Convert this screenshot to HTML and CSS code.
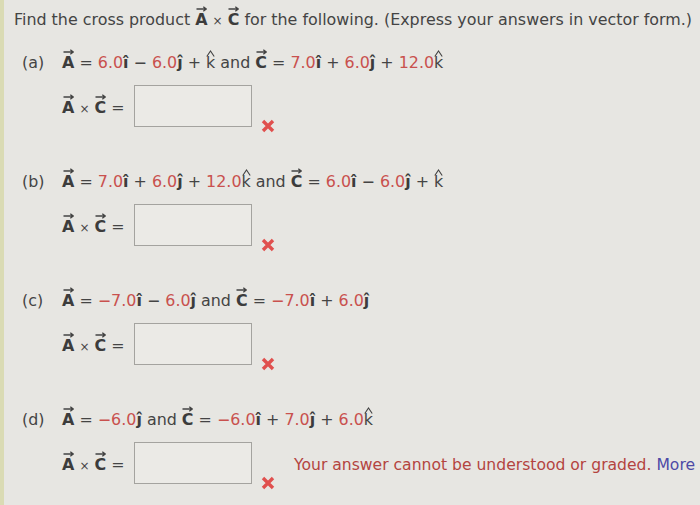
FILE: index.html
```html
<!DOCTYPE html>
<html>
<head>
<meta charset="utf-8">
<link rel="stylesheet" href="styles.css">
</head>
<body>
<div class="page">
  <p class="title">Find the cross product <span class="vec"><span class="arr"><svg width="11" height="6" viewBox="0 0 11 6"><path d="M0.5 3H10M7.3 0.7L10.2 3L7.3 5.3" fill="none" stroke="#444" stroke-width="1.3"/></svg></span><b>A</b></span> <span class="times">×</span> <span class="vec"><span class="arr"><svg width="11" height="6" viewBox="0 0 11 6"><path d="M0.5 3H10M7.3 0.7L10.2 3L7.3 5.3" fill="none" stroke="#444" stroke-width="1.3"/></svg></span><b>C</b></span> for the following. (Express your answers in vector form.)</p>

  <div class="part">
    <div class="formula">
      <span class="lbl">(a)</span>
      <span class="vec"><span class="arr"><svg width="11" height="6" viewBox="0 0 11 6"><path d="M0.5 3H10M7.3 0.7L10.2 3L7.3 5.3" fill="none" stroke="#444" stroke-width="1.3"/></svg></span><b>A</b></span> = <span class="num">6.0</span><b>î</b> − <span class="num">6.0</span><b>ĵ</b> + <span class="hat"><span class="cap"><svg width="9" height="7" viewBox="0 0 9 7"><path d="M0.8 6.5L4.5 1L8.2 6.5" fill="none" stroke="#444" stroke-width="1.1"/></svg></span>k</span> and <span class="vec"><span class="arr"><svg width="11" height="6" viewBox="0 0 11 6"><path d="M0.5 3H10M7.3 0.7L10.2 3L7.3 5.3" fill="none" stroke="#444" stroke-width="1.3"/></svg></span><b>C</b></span> = <span class="num">7.0</span><b>î</b> + <span class="num">6.0</span><b>ĵ</b> + <span class="num">12.0</span><span class="hat"><span class="cap"><svg width="9" height="7" viewBox="0 0 9 7"><path d="M0.8 6.5L4.5 1L8.2 6.5" fill="none" stroke="#444" stroke-width="1.1"/></svg></span>k</span>
    </div>
    <div class="answer">
      <span class="alabel"><span class="vec"><span class="arr"><svg width="11" height="6" viewBox="0 0 11 6"><path d="M0.5 3H10M7.3 0.7L10.2 3L7.3 5.3" fill="none" stroke="#444" stroke-width="1.3"/></svg></span><b>A</b></span> <span class="times">×</span> <span class="vec"><span class="arr"><svg width="11" height="6" viewBox="0 0 11 6"><path d="M0.5 3H10M7.3 0.7L10.2 3L7.3 5.3" fill="none" stroke="#444" stroke-width="1.3"/></svg></span><b>C</b></span> =</span>
      <span class="box"></span>
      <svg class="wrong" width="14" height="14" viewBox="0 0 14 14"><path d="M2 2L12 12M12 2L2 12" stroke="#e0504e" stroke-width="3.4"/></svg>
    </div>
  </div>

  <div class="part">
    <div class="formula">
      <span class="lbl">(b)</span>
      <span class="vec"><span class="arr"><svg width="11" height="6" viewBox="0 0 11 6"><path d="M0.5 3H10M7.3 0.7L10.2 3L7.3 5.3" fill="none" stroke="#444" stroke-width="1.3"/></svg></span><b>A</b></span> = <span class="num">7.0</span><b>î</b> + <span class="num">6.0</span><b>ĵ</b> + <span class="num">12.0</span><span class="hat"><span class="cap"><svg width="9" height="7" viewBox="0 0 9 7"><path d="M0.8 6.5L4.5 1L8.2 6.5" fill="none" stroke="#444" stroke-width="1.1"/></svg></span>k</span> and <span class="vec"><span class="arr"><svg width="11" height="6" viewBox="0 0 11 6"><path d="M0.5 3H10M7.3 0.7L10.2 3L7.3 5.3" fill="none" stroke="#444" stroke-width="1.3"/></svg></span><b>C</b></span> = <span class="num">6.0</span><b>î</b> − <span class="num">6.0</span><b>ĵ</b> + <span class="hat"><span class="cap"><svg width="9" height="7" viewBox="0 0 9 7"><path d="M0.8 6.5L4.5 1L8.2 6.5" fill="none" stroke="#444" stroke-width="1.1"/></svg></span>k</span>
    </div>
    <div class="answer">
      <span class="alabel"><span class="vec"><span class="arr"><svg width="11" height="6" viewBox="0 0 11 6"><path d="M0.5 3H10M7.3 0.7L10.2 3L7.3 5.3" fill="none" stroke="#444" stroke-width="1.3"/></svg></span><b>A</b></span> <span class="times">×</span> <span class="vec"><span class="arr"><svg width="11" height="6" viewBox="0 0 11 6"><path d="M0.5 3H10M7.3 0.7L10.2 3L7.3 5.3" fill="none" stroke="#444" stroke-width="1.3"/></svg></span><b>C</b></span> =</span>
      <span class="box"></span>
      <svg class="wrong" width="14" height="14" viewBox="0 0 14 14"><path d="M2 2L12 12M12 2L2 12" stroke="#e0504e" stroke-width="3.4"/></svg>
    </div>
  </div>

  <div class="part">
    <div class="formula">
      <span class="lbl">(c)</span>
      <span class="vec"><span class="arr"><svg width="11" height="6" viewBox="0 0 11 6"><path d="M0.5 3H10M7.3 0.7L10.2 3L7.3 5.3" fill="none" stroke="#444" stroke-width="1.3"/></svg></span><b>A</b></span> = <span class="num">−7.0</span><b>î</b> − <span class="num">6.0</span><b>ĵ</b> and <span class="vec"><span class="arr"><svg width="11" height="6" viewBox="0 0 11 6"><path d="M0.5 3H10M7.3 0.7L10.2 3L7.3 5.3" fill="none" stroke="#444" stroke-width="1.3"/></svg></span><b>C</b></span> = <span class="num">−7.0</span><b>î</b> + <span class="num">6.0</span><b>ĵ</b>
    </div>
    <div class="answer">
      <span class="alabel"><span class="vec"><span class="arr"><svg width="11" height="6" viewBox="0 0 11 6"><path d="M0.5 3H10M7.3 0.7L10.2 3L7.3 5.3" fill="none" stroke="#444" stroke-width="1.3"/></svg></span><b>A</b></span> <span class="times">×</span> <span class="vec"><span class="arr"><svg width="11" height="6" viewBox="0 0 11 6"><path d="M0.5 3H10M7.3 0.7L10.2 3L7.3 5.3" fill="none" stroke="#444" stroke-width="1.3"/></svg></span><b>C</b></span> =</span>
      <span class="box"></span>
      <svg class="wrong" width="14" height="14" viewBox="0 0 14 14"><path d="M2 2L12 12M12 2L2 12" stroke="#e0504e" stroke-width="3.4"/></svg>
    </div>
  </div>

  <div class="part">
    <div class="formula">
      <span class="lbl">(d)</span>
      <span class="vec"><span class="arr"><svg width="11" height="6" viewBox="0 0 11 6"><path d="M0.5 3H10M7.3 0.7L10.2 3L7.3 5.3" fill="none" stroke="#444" stroke-width="1.3"/></svg></span><b>A</b></span> = <span class="num">−6.0</span><b>ĵ</b> and <span class="vec"><span class="arr"><svg width="11" height="6" viewBox="0 0 11 6"><path d="M0.5 3H10M7.3 0.7L10.2 3L7.3 5.3" fill="none" stroke="#444" stroke-width="1.3"/></svg></span><b>C</b></span> = <span class="num">−6.0</span><b>î</b> + <span class="num">7.0</span><b>ĵ</b> + <span class="num">6.0</span><span class="hat"><span class="cap"><svg width="9" height="7" viewBox="0 0 9 7"><path d="M0.8 6.5L4.5 1L8.2 6.5" fill="none" stroke="#444" stroke-width="1.1"/></svg></span>k</span>
    </div>
    <div class="answer">
      <span class="alabel"><span class="vec"><span class="arr"><svg width="11" height="6" viewBox="0 0 11 6"><path d="M0.5 3H10M7.3 0.7L10.2 3L7.3 5.3" fill="none" stroke="#444" stroke-width="1.3"/></svg></span><b>A</b></span> <span class="times">×</span> <span class="vec"><span class="arr"><svg width="11" height="6" viewBox="0 0 11 6"><path d="M0.5 3H10M7.3 0.7L10.2 3L7.3 5.3" fill="none" stroke="#444" stroke-width="1.3"/></svg></span><b>C</b></span> =</span>
      <span class="box"></span>
      <svg class="wrong" width="14" height="14" viewBox="0 0 14 14"><path d="M2 2L12 12M12 2L2 12" stroke="#e0504e" stroke-width="3.4"/></svg>
      <span class="msg">Your answer cannot be understood or graded. <span class="more">More</span></span>
    </div>
  </div>
</div>
</body>
</html>
```

FILE: styles.css
```css
html, body {
  margin: 0;
  padding: 0;
}
body {
  background: #e7e6e2;
  font-family: "DejaVu Sans", Verdana, sans-serif;
  font-size: 15.9px;
  color: #444444;
  width: 700px;
  height: 505px;
  overflow: hidden;
}
.page {
  border-left: 4px solid #dadbb4;
  height: 505px;
  box-sizing: border-box;
  padding-top: 6px;
  white-space: nowrap;
}
.title {
  margin: 0 0 0 10px;
  line-height: 20px;
}
.part {
  margin: 18px 0 41px 18px;
}
.part + .part {
  margin-top: 0;
}
.formula {
  line-height: 24px;
  height: 24px;
}
.lbl {
  display: inline-block;
  width: 35px;
}
b {
  font-weight: bold;
  color: #3c3c3c;
}
.num {
  color: #c9514e;
}
.vec, .hat {
  display: inline-block;
  text-align: center;
  line-height: 1;
}
.arr, .cap {
  display: block;
  height: 6px;
  line-height: 6px;
}
.cap {
  height: 5px;
}
.arr svg, .cap svg {
  display: block;
  margin: 0 auto;
}
.cap svg {
  margin-top: -2px;
}
.times {
  font-size: 12px;
}
.answer {
  display: flex;
  align-items: flex-start;
  margin: 12px 0 0 40px;
  height: 42px;
}
.alabel {
  line-height: 18px;
  margin-top: 9px;
  width: 72px;
  flex: none;
}
.box {
  width: 116px;
  height: 40px;
  border: 1px solid #a4a39f;
  background: #ebeae6;
  flex: none;
}
.wrong {
  margin: 34px 0 0 9px;
  flex: none;
}
.msg {
  margin: 14px 0 0 19px;
  font-size: 15.6px;
  color: #b4443f;
  line-height: 18px;
}
.more {
  color: #4d4aa6;
}
```
